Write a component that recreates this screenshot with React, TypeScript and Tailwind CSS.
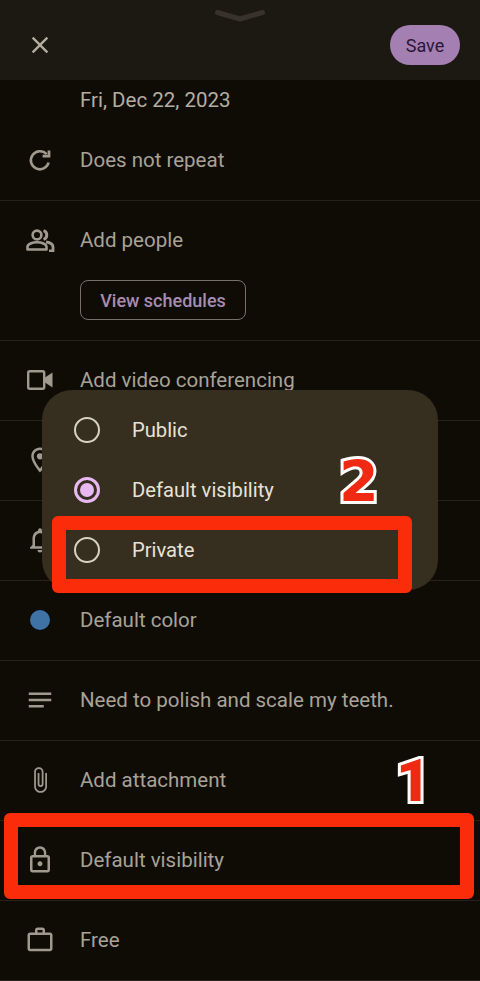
import { ReactNode } from "react";
import {
  MdClose,
  MdOutlineLocationOn,
  MdOutlineNotifications,
  MdNotes,
  MdAttachFile,
  MdLockOutline,
  MdWorkOutline,
} from "react-icons/md";

// label is optional: the rows behind the popup show only their icon
function Row({ icon, label, tall, children }: { icon?: ReactNode; label?: string; tall?: boolean; children?: ReactNode }) {
  return (
    <div className={tall ? "h-[140px] shadow-[0_1px_0_#26221b]" : "h-20 shadow-[0_1px_0_#26221b]"}>
      <div className="flex h-20 items-center">
        <div className="flex w-20 justify-center text-[#a09a8e]">{icon}</div>
        {label && <span className="text-[20.5px] text-[#a8a297]">{label}</span>}
      </div>
      {children}
    </div>
  );
}

function Radio({ label, checked }: { label: string; checked?: boolean }) {
  return (
    <div className="flex h-[60px] items-center">
      <div className="flex w-[90px] justify-center">
        {checked ? (
          <div className="flex h-[26px] w-[26px] items-center justify-center rounded-full border-[3px] border-[#e8b8f2]">
            <div className="h-[14px] w-[14px] rounded-full bg-[#e8b8f2]" />
          </div>
        ) : (
          <div className="h-[26px] w-[26px] rounded-full border-[2.5px] border-[#d8d2c4]" />
        )}
      </div>
      <span className="text-[20.2px] text-[#e8e2d6]">{label}</span>
    </div>
  );
}

function RepeatIcon() {
  return (
    <svg width="30" height="30" viewBox="0 0 30 30" fill="none" stroke="currentColor" strokeWidth="2.6">
      <path d="M21.5 9.2 A9 9 0 1 0 23.6 17.5" />
      <path d="M24 5.5 V11.2 H17.6" strokeWidth="2.8" />
    </svg>
  );
}

function PeopleIcon() {
  return (
    <svg width="30" height="24" viewBox="0 0 30 24" fill="none" stroke="currentColor" strokeWidth="2.6">
      <circle cx="12" cy="7" r="4.4" />
      <path d="M2.5 21.5 V19 C2.5 16 7.5 14.2 12 14.2 S21.5 16 21.5 19 V21.5 Z" strokeLinejoin="round" />
      <path d="M18.5 2.6 A4.6 4.6 0 0 1 18.5 11.4" strokeWidth="3" />
      <path d="M21 14 C25 14.6 28 16.4 28 19 V22.8 H24" strokeWidth="2.8" />
    </svg>
  );
}

function VideoIcon() {
  return (
    <svg width="26" height="20" viewBox="0 0 26 20" fill="none">
      <rect x="1.2" y="1.2" width="16" height="17.6" rx="1.5" stroke="currentColor" strokeWidth="2.4" />
      <path d="M18 7.5 L25.5 2.5 V17.5 L18 12.5 Z" fill="currentColor" />
    </svg>
  );
}

export default function App() {
  return (
    <div className="relative h-[981px] w-[480px] overflow-hidden bg-[#0f0c06] font-['Roboto',sans-serif]">
      <div className="flex h-20 items-center justify-between bg-[#1c1812] pl-[26px] pr-5 pt-2.5">
        <MdClose size={28} className="text-[#b4aea2]" />
        <button className="flex h-10 w-[70px] items-center justify-center rounded-full bg-[#a47fb2] text-[18px] text-[#2c1538]">
          Save
        </button>
      </div>
      <svg className="absolute left-[214px] top-[9px]" width="52" height="14" viewBox="0 0 52 14">
        <path d="M3.5 3.5 L26 10 L48.5 3.5" fill="none" stroke="#38332a" strokeWidth="5" strokeLinecap="round" strokeLinejoin="round" />
      </svg>

      <div className="flex h-10 items-center pl-20 text-[20.5px] text-[#b4aea2]">Fri, Dec 22, 2023</div>
      <Row icon={<RepeatIcon />} label="Does not repeat" />
      <Row icon={<PeopleIcon />} label="Add people" tall>
        <button className="ml-20 flex h-10 w-[166px] items-center justify-center rounded-lg border border-[#77716a] text-[18px] font-medium text-[#a78cb2]">
          View schedules
        </button>
      </Row>
      <Row icon={<VideoIcon />} label="Add video conferencing" />
      <Row icon={<MdOutlineLocationOn size={30} />} />
      <Row icon={<MdOutlineNotifications size={30} />} />
      <Row icon={<div className="h-5 w-5 rounded-full bg-[#3f73a6]" />} label="Default color" />
      <Row icon={<MdNotes size={30} />} label="Need to polish and scale my teeth." />
      <Row icon={<MdAttachFile size={28} />} label="Add attachment" />
      <Row icon={<MdLockOutline size={30} />} label="Default visibility" />
      <Row icon={<MdWorkOutline size={30} />} label="Free" />

      <div className="absolute left-[42px] top-[390px] h-[200px] w-[396px] rounded-[30px] bg-[#362e1f] pt-2.5">
        <Radio label="Public" />
        <Radio label="Default visibility" checked />
        <Radio label="Private" />
      </div>

      <div className="absolute left-[52px] top-[516px] h-[77px] w-[360px] rounded-md border-[14px] border-[#fb2c0a]" />
      <div className="absolute left-[4px] top-[813px] h-[86px] w-[470px] rounded-md border-[14px] border-[#fb2c0a]" />

      <span className="absolute left-[339px] top-[454px] font-['DejaVu_Sans',sans-serif] text-[57px] font-bold leading-none text-[#f02a12] [-webkit-text-stroke:6px_#ffffff] [paint-order:stroke_fill]">
        2
      </span>
      <span className="absolute left-[396px] top-[751px] font-['Roboto',sans-serif] text-[60px] font-black leading-none text-[#f02a12] [-webkit-text-stroke:6px_#ffffff] [paint-order:stroke_fill]">
        1
      </span>
    </div>
  );
}
